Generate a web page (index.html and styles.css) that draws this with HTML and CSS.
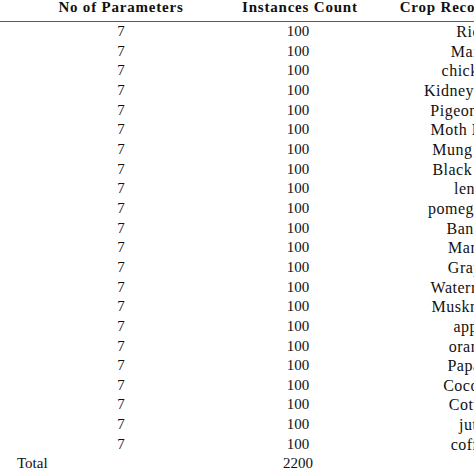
FILE: index.html
```html
<!DOCTYPE html>
<html>
<head>
<meta charset="utf-8">
<link rel="stylesheet" href="styles.css">
</head>
<body>
<table class="crop-table">
  <colgroup>
    <col class="c1"><col class="c2"><col class="c3">
  </colgroup>
  <thead>
    <tr><th>No of Parameters</th><th>Instances Count</th><th>Crop Recommended</th></tr>
  </thead>
  <tbody>
    <tr><td>7</td><td>100</td><td class="name">Rice</td></tr>
    <tr><td>7</td><td>100</td><td class="name">Maize</td></tr>
    <tr><td>7</td><td>100</td><td class="name">chickpea</td></tr>
    <tr><td>7</td><td>100</td><td class="name">Kidney Beans</td></tr>
    <tr><td>7</td><td>100</td><td class="name">Pigeon Peas</td></tr>
    <tr><td>7</td><td>100</td><td class="name">Moth Beans</td></tr>
    <tr><td>7</td><td>100</td><td class="name">Mung Bean</td></tr>
    <tr><td>7</td><td>100</td><td class="name">Black gram</td></tr>
    <tr><td>7</td><td>100</td><td class="name">lentil</td></tr>
    <tr><td>7</td><td>100</td><td class="name">pomegranate</td></tr>
    <tr><td>7</td><td>100</td><td class="name">Banana</td></tr>
    <tr><td>7</td><td>100</td><td class="name">Mango</td></tr>
    <tr><td>7</td><td>100</td><td class="name">Grapes</td></tr>
    <tr><td>7</td><td>100</td><td class="name">Watermelon</td></tr>
    <tr><td>7</td><td>100</td><td class="name">Muskmelon</td></tr>
    <tr><td>7</td><td>100</td><td class="name">apple</td></tr>
    <tr><td>7</td><td>100</td><td class="name">orange</td></tr>
    <tr><td>7</td><td>100</td><td class="name">Papaya</td></tr>
    <tr><td>7</td><td>100</td><td class="name">Coconut</td></tr>
    <tr><td>7</td><td>100</td><td class="name">Cotton</td></tr>
    <tr><td>7</td><td>100</td><td class="name">jute</td></tr>
    <tr><td>7</td><td>100</td><td class="name">coffee</td></tr>
    <tr class="total"><td>Total</td><td>2200</td><td></td></tr>
  </tbody>
</table>
</body>
</html>
```

FILE: styles.css
```css
html, body {
  margin: 0;
  padding: 0;
  background: #ffffff;
  overflow: hidden;
  width: 474px;
  height: 474px;
}
.crop-table {
  border-collapse: collapse;
  table-layout: fixed;
  width: 590px;
  font-family: "Liberation Serif", "Times New Roman", serif;
  font-size: 15px;
  color: #111111;
}
.c1 { width: 242px; }
.c2 { width: 112px; }
.c3 { width: 236px; }
.crop-table th {
  font-weight: bold;
  letter-spacing: 0.8px;
  text-align: center;
  line-height: 15px;
  height: 21px;
  padding: 0;
  vertical-align: top;
  border-bottom: 1px solid #5a5a5a;
  white-space: nowrap;
}
.crop-table td {
  text-align: center;
  line-height: 19.65px;
  padding: 0;
  white-space: nowrap;
}
.crop-table td.name {
  font-size: 16px;
  letter-spacing: 0.5px;
}
.crop-table .total td:first-child {
  text-align: left;
  padding-left: 17px;
}
```
